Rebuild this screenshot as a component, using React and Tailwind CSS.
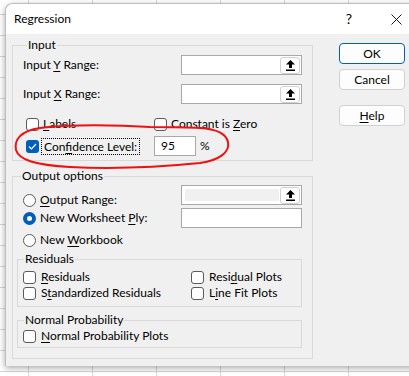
import React from 'react';

const U = ({ children }) => <span className="underline underline-offset-[2px]">{children}</span>;

const UploadIcon = () => (
  <svg width="9" height="11" viewBox="0 0 9 11">
    <polygon points="4.5,0 0,4.5 3,4.5 3,8 6,8 6,4.5 9,4.5" fill="#000" />
    <rect x="0" y="9.5" width="9" height="1.5" fill="#000" />
  </svg>
);

const RangeBox = ({ disabled }) => (
  <div className="w-[121px] h-[20px] border border-[#a8a8a8] bg-white flex items-center">
    {disabled ? <div className="ml-[3px] h-[12px] flex-1 bg-[#f0f0f0]" /> : <div className="flex-1" />}
    <div className="mx-[1px] w-[20px] h-[17px] rounded-[3px] border border-[#d0d0d0] bg-white flex items-center justify-center">
      <UploadIcon />
    </div>
  </div>
);

const Checkbox = ({ checked }) =>
  checked ? (
    <span className="w-[13px] h-[13px] rounded-[3px] bg-[#005fb8] flex items-center justify-center shrink-0">
      <svg width="9" height="7" viewBox="0 0 9 7">
        <path d="M1 3.5 L3.5 6 L8 1" stroke="#fff" strokeWidth="1.2" fill="none" />
      </svg>
    </span>
  ) : (
    <span className="w-[13px] h-[13px] rounded-[3px] border border-[#5a5a5a] bg-white shrink-0" />
  );

const Radio = ({ checked }) =>
  checked ? (
    <span className="w-[13px] h-[13px] rounded-full bg-[#005fb8] flex items-center justify-center shrink-0">
      <span className="w-[5px] h-[5px] rounded-full bg-white" />
    </span>
  ) : (
    <span className="w-[13px] h-[13px] rounded-full border border-[#5a5a5a] bg-white shrink-0" />
  );

const Btn = ({ children, primary }) => (
  <div
    className={
      primary
        ? 'w-[66px] h-[21px] rounded-[4px] border border-[#005fb8] bg-[#fdfdfd] flex items-center justify-center'
        : 'w-[66px] h-[21px] rounded-[4px] border border-[#d0d0d0] bg-[#fdfdfd] flex items-center justify-center'
    }
  >
    {children}
  </div>
);

const App = () => {
  return (
    <div
      className="relative w-[409px] h-[376px] overflow-hidden bg-white bg-[image:linear-gradient(to_right,#d6d6d6_1px,transparent_1px),linear-gradient(to_bottom,#d6d6d6_1px,transparent_1px)] bg-[size:64px_21px] bg-[position:28px_14px] pt-[3px] pl-[5px] text-[12px] leading-[16px] text-black"
      style={{ fontFamily: 'Lato, "Noto Sans", sans-serif' }}
    >
      {/* dialog */}
      <div className="w-[420px] h-[363px] rounded-tl-[8px] border-l border-t border-[#bdbdbd] bg-[#f0f0f0] shadow-[0_2px_6px_rgba(0,0,0,0.35)] overflow-hidden">
        {/* title bar */}
        <div className="h-[30px] bg-white flex items-center pl-[8px]">
          <span className="text-[12px]">Regression</span>
          <span className="ml-auto mr-[39px] text-[14px]">?</span>
          <svg className="mr-[23px]" width="11" height="11" viewBox="0 0 11 11">
            <path d="M0.5 0.5 L10.5 10.5 M10.5 0.5 L0.5 10.5" stroke="#000" strokeWidth="0.9" />
          </svg>
        </div>

        {/* body */}
        <div className="flex pl-[6px]">
          <div className="w-[301px]">
            {/* Input */}
            <fieldset className="mt-[3px] border border-[#d9d9d9] pl-[10px] pr-[10px] pb-[4px]">
              <legend className="ml-[4px] px-[1px]">Input</legend>
              <div className="mt-[2px] h-[20px] flex items-center justify-between">
                <span>Input <U>Y</U> Range:</span>
                <RangeBox />
              </div>
              <div className="mt-[9px] h-[20px] flex items-center justify-between">
                <span>Input <U>X</U> Range:</span>
                <RangeBox />
              </div>
              <div className="mt-[12px] h-[16px] flex items-center">
                <div className="w-[131px] flex items-center pl-[3px] gap-[4px]">
                  <Checkbox />
                  <span><U>L</U>abels</span>
                </div>
                <div className="flex items-center gap-[4px]">
                  <Checkbox />
                  <span>Constant is <U>Z</U>ero</span>
                </div>
              </div>
              <div className="mt-[4px] h-[20px] flex items-center">
                <div className="w-[131px] flex items-center pl-[3px]">
                  <Checkbox checked />
                  <span className="ml-[2px] px-[2px] border border-dotted border-black leading-[15px]">
                    Con<U>f</U>idence Level:
                  </span>
                </div>
                <div className="w-[42px] h-[20px] border border-[#a8a8a8] bg-white flex items-center px-[6px]">95</div>
                <span className="ml-[4px]">%</span>
              </div>
            </fieldset>

            {/* Output options */}
            <fieldset className="mt-[7px] border border-[#d9d9d9] pl-[4px] pr-[10px] pb-[10px]">
              <legend className="ml-[4px] px-[1px]">Output options</legend>
              <div className="mt-[1px] h-[20px] flex items-start justify-between">
                <div className="mt-[7px] ml-[6px] flex items-center gap-[4px]">
                  <Radio />
                  <span><U>O</U>utput Range:</span>
                </div>
                <RangeBox disabled />
              </div>
              <div className="mt-[3px] h-[20px] flex items-center justify-between">
                <div className="ml-[6px] flex items-center gap-[4px]">
                  <Radio checked />
                  <span>New Worksheet <U>P</U>ly:</span>
                </div>
                <div className="w-[121px] h-[20px] border border-[#a8a8a8] bg-white" />
              </div>
              <div className="mt-[4px] h-[16px] flex items-center">
                <div className="ml-[6px] flex items-center gap-[4px]">
                  <Radio />
                  <span>New <U>W</U>orkbook</span>
                </div>
              </div>

              <fieldset className="mt-[3px] border border-[#d9d9d9] pl-[5px] pb-[5px]">
                <legend className="ml-[1px] px-[1px]">Residuals</legend>
                <div className="mt-[2px] h-[16px] flex items-center">
                  <div className="w-[168px] flex items-center gap-[5px]">
                    <Checkbox />
                    <span><U>R</U>esiduals</span>
                  </div>
                  <div className="flex items-center gap-[5px]">
                    <Checkbox />
                    <span>Resi<U>d</U>ual Plots</span>
                  </div>
                </div>
                <div className="h-[16px] flex items-center">
                  <div className="w-[168px] flex items-center gap-[5px]">
                    <Checkbox />
                    <span>S<U>t</U>andardized Residuals</span>
                  </div>
                  <div className="flex items-center gap-[5px]">
                    <Checkbox />
                    <span>L<U>i</U>ne Fit Plots</span>
                  </div>
                </div>
              </fieldset>

              <fieldset className="mt-[5px] border border-[#d9d9d9] pl-[5px] pb-[3px]">
                <legend className="ml-[1px] px-[1px]">Normal Probability</legend>
                <div className="h-[16px] flex items-center gap-[5px]">
                  <Checkbox />
                  <span><U>N</U>ormal Probability Plots</span>
                </div>
              </fieldset>
            </fieldset>
          </div>

          {/* buttons */}
          <div className="ml-[26px] mt-[9px] flex flex-col">
            <Btn primary>OK</Btn>
            <div className="mt-[5px]"><Btn>Cancel</Btn></div>
            <div className="mt-[15px]"><Btn><span><U>H</U>elp</span></Btn></div>
          </div>
        </div>
      </div>

      {/* red hand-drawn annotation */}
      <svg className="absolute left-0 top-0 pointer-events-none" width="409" height="376">
        <path
          d="M150 127 C 120 125, 70 124, 40 128 C 20 131, 14 140, 16 150 C 19 160, 35 165, 70 167 C 110 169, 160 167, 200 163 C 220 160, 230 152, 228 142 C 226 133, 215 129, 200 128 C 185 127, 165 127, 150 127"
          stroke="#ee1111"
          strokeWidth="2"
          fill="none"
        />
      </svg>
    </div>
  );
};

export default App;
